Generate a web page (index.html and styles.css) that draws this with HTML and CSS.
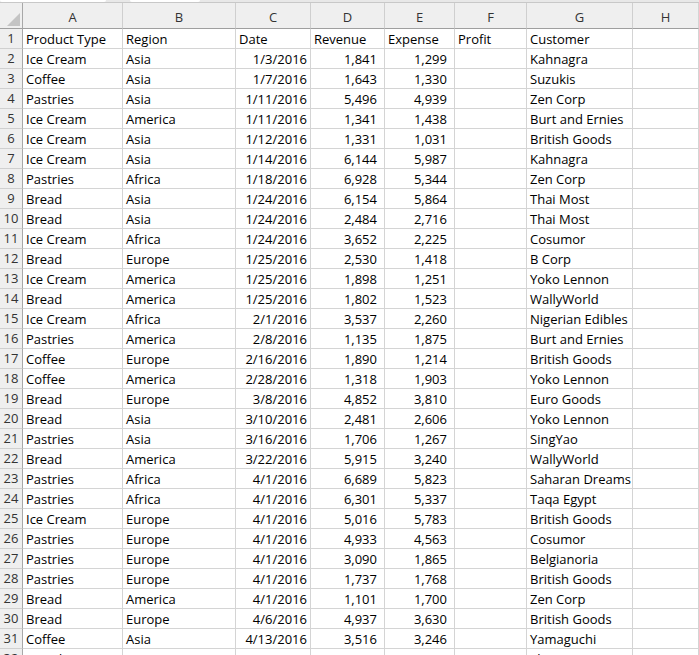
FILE: index.html
```html
<!DOCTYPE html>
<html>
<head>
<meta charset="utf-8">
<link rel="stylesheet" href="styles.css">
</head>
<body>
<div class="sheet">
  <div class="topbar">
    <div class="tb-box tb-a"></div>
    <div class="tb-box tb-b"></div>
  </div>
  <div class="row head">
    <div class="corner"><span class="tri"></span></div>
    <div class="ch">A</div><div class="ch">B</div><div class="ch">C</div><div class="ch">D</div>
    <div class="ch">E</div><div class="ch">F</div><div class="ch">G</div><div class="ch">H</div>
  </div>
  <div id="rows"></div>
</div>
<script src="app.js"></script>
</body>
</html>
```
FILE: app.js
```js
const data = [
["Product Type","Region","Date","Revenue","Expense","Profit","Customer",true],
["Ice Cream","Asia","1/3/2016","1,841","1,299","","Kahnagra"],
["Coffee","Asia","1/7/2016","1,643","1,330","","Suzukis"],
["Pastries","Asia","1/11/2016","5,496","4,939","","Zen Corp"],
["Ice Cream","America","1/11/2016","1,341","1,438","","Burt and Ernies"],
["Ice Cream","Asia","1/12/2016","1,331","1,031","","British Goods"],
["Ice Cream","Asia","1/14/2016","6,144","5,987","","Kahnagra"],
["Pastries","Africa","1/18/2016","6,928","5,344","","Zen Corp"],
["Bread","Asia","1/24/2016","6,154","5,864","","Thai Most"],
["Bread","Asia","1/24/2016","2,484","2,716","","Thai Most"],
["Ice Cream","Africa","1/24/2016","3,652","2,225","","Cosumor"],
["Bread","Europe","1/25/2016","2,530","1,418","","B Corp"],
["Ice Cream","America","1/25/2016","1,898","1,251","","Yoko Lennon"],
["Bread","America","1/25/2016","1,802","1,523","","WallyWorld"],
["Ice Cream","Africa","2/1/2016","3,537","2,260","","Nigerian Edibles"],
["Pastries","America","2/8/2016","1,135","1,875","","Burt and Ernies"],
["Coffee","Europe","2/16/2016","1,890","1,214","","British Goods"],
["Coffee","America","2/28/2016","1,318","1,903","","Yoko Lennon"],
["Bread","Europe","3/8/2016","4,852","3,810","","Euro Goods"],
["Bread","Asia","3/10/2016","2,481","2,606","","Yoko Lennon"],
["Pastries","Asia","3/16/2016","1,706","1,267","","SingYao"],
["Bread","America","3/22/2016","5,915","3,240","","WallyWorld"],
["Pastries","Africa","4/1/2016","6,689","5,823","","Saharan Dreams"],
["Pastries","Africa","4/1/2016","6,301","5,337","","Taqa Egypt"],
["Ice Cream","Europe","4/1/2016","5,016","5,783","","British Goods"],
["Pastries","Europe","4/1/2016","4,933","4,563","","Cosumor"],
["Pastries","Europe","4/1/2016","3,090","1,865","","Belgianoria"],
["Pastries","Europe","4/1/2016","1,737","1,768","","British Goods"],
["Bread","America","4/1/2016","1,101","1,700","","Zen Corp"],
["Bread","Europe","4/6/2016","4,937","3,630","","British Goods"],
["Coffee","Asia","4/13/2016","3,516","3,246","","Yamaguchi"],
["Bread","Europe","4/15/2016","5,105","4,215","","Thai Most"]
];
const rows = document.getElementById("rows");
data.forEach((r, i) => {
  const row = document.createElement("div");
  row.className = "row";
  const rh = document.createElement("div");
  rh.className = "rh";
  rh.textContent = i + 1;
  row.appendChild(rh);
  const isHead = r[7] === true;
  for (let c = 0; c < 8; c++) {
    const cell = document.createElement("div");
    cell.className = "cell";
    if (!isHead) {
      if (c === 2) cell.classList.add("num");
      if (c === 3 || c === 4) cell.classList.add("num", "acct");
    }
    cell.textContent = c < 7 ? r[c] : "";
    row.appendChild(cell);
  }
  rows.appendChild(row);
});
```
FILE: styles.css
```css
html, body {
  margin: 0;
  padding: 0;
  background: #ffffff;
}
body {
  width: 699px;
  height: 655px;
  overflow: hidden;
  font-family: "Open Sans", "Noto Sans", sans-serif;
  font-size: 13px;
  color: #000;
}
.sheet {
  width: 699px;
}
.topbar {
  height: 2px;
  background: #e8e8e8;
  border-bottom: 1px solid #c8c8c8;
  display: flex;
  gap: 24px;
}
.tb-box {
  height: 2px;
  background: #ffffff;
  border-radius: 0 0 3px 3px;
}
.tb-a { width: 106px; }
.tb-b { width: 70px; }

.row {
  display: grid;
  grid-template-columns: 23px 100px 113px 75px 74px 70px 72px 106px 66px;
  height: 20px;
}
.row > div {
  box-sizing: border-box;
  border-right: 1px solid #d4d4d4;
  border-bottom: 1px solid #d4d4d4;
  white-space: nowrap;
  overflow: hidden;
}
.row.head {
  height: 26px;
  background: #efefef;
}
.row.head > div {
  border-bottom: 1px solid #9f9f9f;
  border-right: 1px solid #cfcfcf;
}
.row.head > .corner {
  border-right: 1px solid #a8a8a8;
  position: relative;
}
.tri {
  position: absolute;
  right: 2px;
  bottom: 2px;
  width: 0;
  height: 0;
  border-left: 13px solid transparent;
  border-bottom: 13px solid #c4c4c4;
}
.ch {
  text-align: center;
  color: #333;
  font-size: 13px;
  line-height: 25px;
  padding-top: 2px;
}
.rh {
  background: #efefef;
  text-align: center;
  color: #333;
  line-height: 19px;
  border-right: 1px solid #a8a8a8 !important;
  border-bottom: 1px solid #d0d0d0 !important;
}
.cell {
  padding: 0 3px;
  line-height: 19px;
  padding-top: 1px;
  line-height: 18px;
}
.num {
  text-align: right;
}
.acct {
  padding-right: 7px;
}
.row > div:last-child {
  border-right: 1px solid #d4d4d4;
}
```
